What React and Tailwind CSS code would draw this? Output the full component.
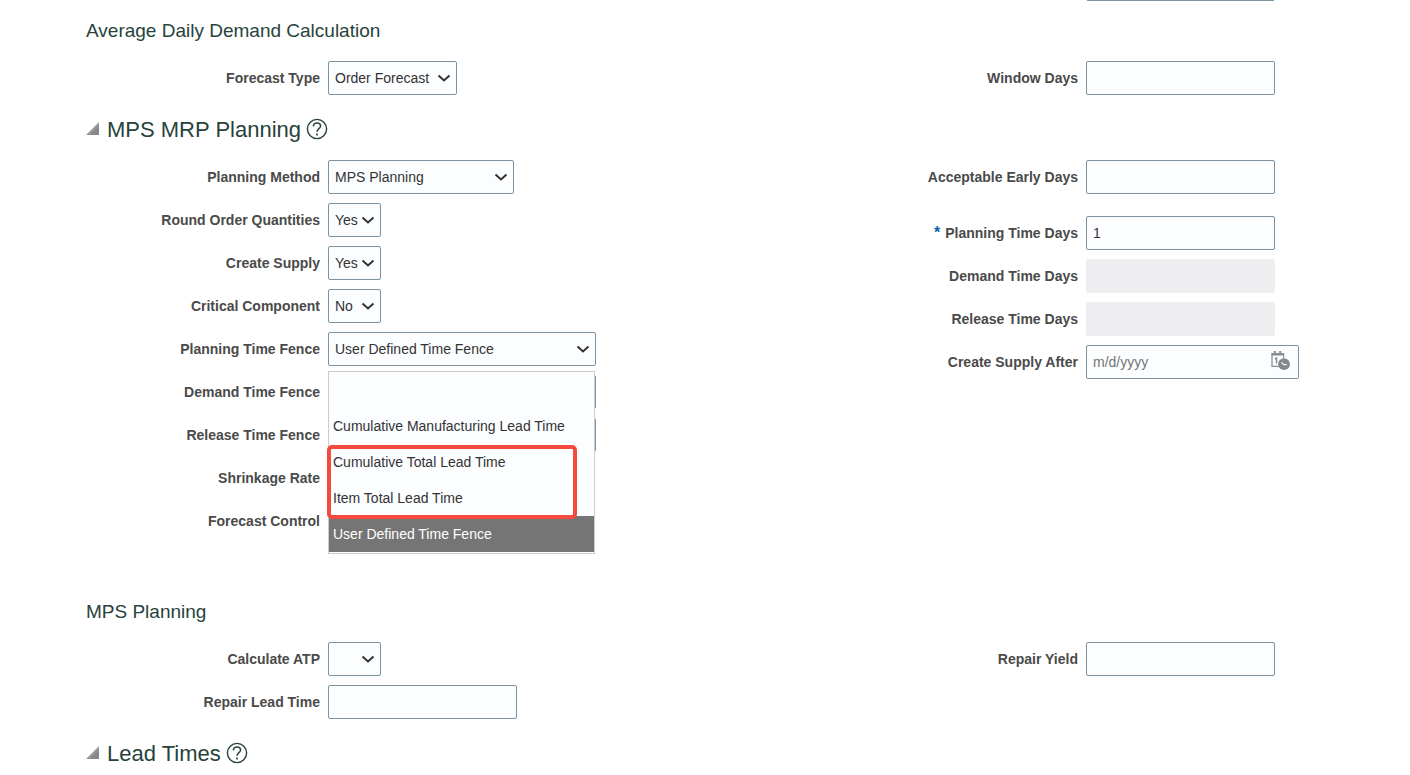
import { useState } from "react"

const fieldBase = "h-[34px] rounded-[2px] border border-[#7b93a0] bg-[#fbfdff] text-sm text-[#333333]"

const Row = ({ id, label, required, children }) => (
    <div className="flex items-center gap-2">
        <label htmlFor={id} className="w-[234px] shrink-0 text-right text-sm font-bold text-[#4a4a4a]">
            {required && <span className="mr-[5px] text-base leading-3 text-[#0464ae]">*</span>}
            {label}
        </label>
        {children}
    </div>
)

const Chevron = () => (
    <svg className="pointer-events-none absolute top-[12px] right-[6px]" width="14" height="10" viewBox="0 0 14 10" fill="none" stroke="#333333" strokeWidth="2">
        <path d="M1.5 2.5 L7 7.5 L12.5 2.5" />
    </svg>
)

const Select = ({ id, label, value, width, children }) => (
    <Row id={id} label={label}>
        <div className={`relative ${width}`}>
            <select id={id} defaultValue={value} className={`block w-full appearance-none pr-5 pl-[6px] ${fieldBase}`}>
                <option>{value}</option>
            </select>
            <Chevron />
            {children}
        </div>
    </Row>
)

const TextField = ({ id, label, value, required, disabled }) => (
    <Row id={id} label={label} required={required}>
        {disabled
            ? <input id={id} type="text" disabled className="h-[34px] w-[189px] rounded-[2px] bg-[#eeeef0]" />
            : <input id={id} type="text" defaultValue={value} required={required} className={`w-[189px] px-[6px] ${fieldBase}`} />}
    </Row>
)

const CalendarIcon = () => (
    <svg width="20" height="20" viewBox="0 0 20 20" fill="none">
        <path d="M1 3V15.3H7.5" stroke="#8b8f92" strokeWidth="1.3" />
        <path d="M0.4 2H13.2V7H12V4.4H0.4Z" fill="#8b8f92" />
        <path d="M3.8 0V3M9.2 0V3" stroke="#8b8f92" strokeWidth="2" />
        <path d="M4 8.2L5.5 7.2V12.4" stroke="#8b8f92" strokeWidth="1.5" />
        <circle cx="13" cy="13.2" r="5.9" fill="#83888b" />
        <path d="M10.4 11.4L12.9 13.6H15.8" stroke="#ffffff" strokeWidth="1.2" />
    </svg>
)

const SectionTitle = ({ title }) => (
    <div className="mt-[18px] flex h-8 items-center">
        <button type="button" aria-label={`Collapse ${title}`}>
            <svg width="14" height="14" viewBox="0 0 14 14">
                <defs>
                    <linearGradient id="disclosure" x1="0" y1="0" x2="1" y2="1">
                        <stop offset="0.3" stopColor="#b5b8ba" />
                        <stop offset="0.7" stopColor="#84898c" />
                    </linearGradient>
                </defs>
                <path d="M13 0V13H0Z" fill="url(#disclosure)" />
            </svg>
        </button>
        <h2 className="ml-[7px] text-[22px] text-[#27433b]">{title}</h2>
        <button type="button" aria-label={`Help for ${title}`} className="ml-[5px]">
            <svg width="22" height="22" viewBox="0 0 22 22" fill="none" stroke="#27433b">
                <circle cx="11" cy="11" r="9.6" strokeWidth="1.4" />
                <path d="M7.4 8.4C7.4 6.1 8.9 4.9 11 4.9C13.1 4.9 14.6 6.2 14.6 8.1C14.6 10.6 11 10.8 11 13.8" strokeWidth="1.5" />
                <path d="M11 15.6V17.4" strokeWidth="1.7" />
            </svg>
        </button>
    </div>
)

const SubTitle = ({ children }) => (
    <h3 className="text-[19px] leading-7 text-[#27433b]">{children}</h3>
)

const columns = "grid grid-cols-[758fr_566fr] items-start"

const timeFences = [
    "",
    "Cumulative Manufacturing Lead Time",
    "Cumulative Total Lead Time",
    "Item Total Lead Time",
    "User Defined Time Fence",
]

const TimeFenceList = () => {
    const [selected, setSelected] = useState("User Defined Time Fence")

    return (
        <div className="absolute top-[39px] left-0 z-10 w-[267px]">
            <ul role="listbox" aria-label="Planning Time Fence options" className="border border-[#cccccc] bg-[#fbfdff] pb-px">
                {timeFences.map((item) => (
                    <li key={item} role="option" aria-selected={item === selected}
                        onClick={() => setSelected(item)}
                        className={`h-9 pl-1 text-sm leading-9 whitespace-nowrap ${item === selected ? "bg-[#757575] text-white" : "text-[#333333]"}`}>
                        {item}
                    </li>
                ))}
            </ul>
            <div className="pointer-events-none absolute top-[74px] -left-px h-[74px] w-[250px] rounded-[5px] border-4 border-[#f4493d]" />
        </div>
    )
}

const App = () => {
    return (
        <main className="bg-white pl-[86px] font-['Liberation_Sans',Arial,sans-serif]">
            <div className={columns}>
                <div className="col-start-2 flex h-px items-end overflow-hidden pl-[242px]">
                    <input type="text" aria-label="Demand Days" className={`w-[189px] shrink-0 ${fieldBase}`} />
                </div>
            </div>

            <div className="pt-4">
                <SubTitle>Average Daily Demand Calculation</SubTitle>
            </div>
            <div className={`mt-4 ${columns}`}>
                <Select id="forecastType" label="Forecast Type" value="Order Forecast" width="w-[129px]" />
                <TextField id="windowDays" label="Window Days" />
            </div>

            <SectionTitle title="MPS MRP Planning" />
            <div className={`mt-[15px] ${columns}`}>
                <div className="flex flex-col gap-[9px]">
                    <Select id="planningMethod" label="Planning Method" value="MPS Planning" width="w-[186px]" />
                    <Select id="roundOrder" label="Round Order Quantities" value="Yes" width="w-[53px]" />
                    <Select id="createSupply" label="Create Supply" value="Yes" width="w-[53px]" />
                    <Select id="critical" label="Critical Component" value="No" width="w-[53px]" />
                    <Select id="planningFence" label="Planning Time Fence" value="User Defined Time Fence" width="w-[268px]">
                        <TimeFenceList />
                    </Select>
                    <Select id="demandFence" label="Demand Time Fence" value="" width="w-[268px]" />
                    <Select id="releaseFence" label="Release Time Fence" value="" width="w-[268px]" />
                    <TextField id="shrinkageRate" label="Shrinkage Rate" />
                    <Select id="forecastControl" label="Forecast Control" value="" width="w-[186px]" />
                </div>
                <div>
                    <TextField id="earlyDays" label="Acceptable Early Days" />
                    <div className="mt-[22px] flex flex-col gap-[9px]">
                        <TextField id="planningDays" label="Planning Time Days" value="1" required />
                        <TextField id="demandDays" label="Demand Time Days" disabled />
                        <TextField id="releaseDays" label="Release Time Days" disabled />
                        <Row id="supplyAfter" label="Create Supply After">
                            <div className="relative w-[213px]">
                                <input id="supplyAfter" type="text" placeholder="m/d/yyyy" className={`block w-full pr-8 pl-[6px] placeholder:text-[#757575] ${fieldBase}`} />
                                <button type="button" aria-label="Select date" className="absolute top-[6px] right-2">
                                    <CalendarIcon />
                                </button>
                            </div>
                        </Row>
                    </div>
                </div>
            </div>

            <div className="mt-[60px]">
                <SubTitle>MPS Planning</SubTitle>
            </div>
            <div className={`mt-4 ${columns}`}>
                <div className="flex flex-col gap-[9px]">
                    <Select id="calculateAtp" label="Calculate ATP" value="" width="w-[53px]" />
                    <TextField id="repairLeadTime" label="Repair Lead Time" />
                </div>
                <TextField id="repairYield" label="Repair Yield" />
            </div>

            <SectionTitle title="Lead Times" />
        </main>
    )
}

export default App
